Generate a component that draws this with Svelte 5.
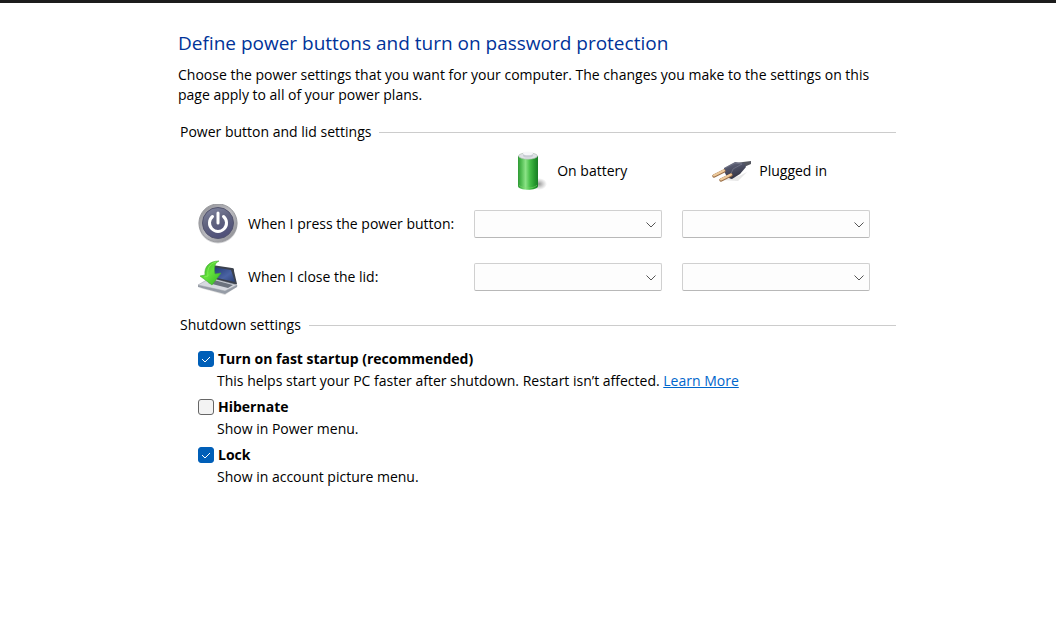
<script>
  let rows = [
    { id: 'power', label: 'When I press the power button:' },
    { id: 'lid', label: 'When I close the lid:' }
  ];

  let options = [
    { id: 'startup', title: 'Turn on fast startup (recommended)', text: 'This helps start your PC faster after shutdown. Restart isn’t affected.', link: 'Learn More', checked: true },
    { id: 'hibernate', title: 'Hibernate', text: 'Show in Power menu.', checked: false },
    { id: 'lock', title: 'Lock', text: 'Show in account picture menu.', checked: true }
  ];
</script>

<main>
  <h1>Define power buttons and turn on password protection</h1>
  <p class="intro">
    Choose the power settings that you want for your computer. The changes you make to the settings on this page apply to all of your power plans.
  </p>

  <section>
    <h2>Power button and lid settings</h2>
    <div class="settings">
      <div class="source battery">
        <svg width="40" height="40" viewBox="0 0 40 40" aria-hidden="true">
          <defs>
            <linearGradient id="cell" x1="0" x2="1">
              <stop offset="0" stop-color="#2f9a35" />
              <stop offset=".16" stop-color="#4fbb50" />
              <stop offset=".38" stop-color="#8be386" />
              <stop offset=".6" stop-color="#45bd47" />
              <stop offset=".85" stop-color="#23952c" />
              <stop offset="1" stop-color="#1a7c26" />
            </linearGradient>
            <radialGradient id="shade">
              <stop offset="0" stop-color="#555" stop-opacity=".6" />
              <stop offset="1" stop-color="#777" stop-opacity="0" />
            </radialGradient>
          </defs>
          <ellipse cx="30" cy="33" rx="8" ry="6" fill="url(#shade)" />
          <path d="M9 5v30c0 5 20 5 20 0V5z" fill="url(#cell)" />
          <path d="M10 34c3 4 15 4 18 0" fill="none" stroke="#7fdc6c" opacity=".5" />
          <ellipse cx="19" cy="5" rx="9.500" ry="3.200" fill="#dfe1e6" stroke="#a9b8ad" stroke-width=".6" />
          <path d="M14 2v3c1 2 9 2 10 0V2z" fill="#c9ccd4" />
          <ellipse cx="19" cy="2.400" rx="5" ry="1.800" fill="#f7f7fa" />
        </svg>
        <span>On battery</span>
      </div>
      <div class="source plugged">
        <svg width="40" height="40" viewBox="0 0 40 40" aria-hidden="true">
          <defs>
            <linearGradient id="plug" x1="0" y1="0" x2=".4" y2="1">
              <stop offset="0" stop-color="#6e7184" />
              <stop offset=".4" stop-color="#52556a" />
              <stop offset="1" stop-color="#303243" />
            </linearGradient>
          </defs>
          <path d="m11 29 16 1 9-9-8 4z" fill="#888" opacity=".2" />
          <path d="m27 12 5-1 8-1v3l-7 3-4 2z" fill="#55575f" />
          <path d="m13 17 11-6 9 1 2 4-6 7-8 5c-3 0-8-4-8-11z" fill="url(#plug)" />
          <path d="m14 17 10-5 7 1-9 5-3 7" fill="none" stroke="#858899" opacity=".5" />
          <path d="m13 20-10 5m17-1-10 5" stroke="#9b7049" stroke-width="3.500" stroke-linecap="round" />
          <path d="m13 19.500-10 5m17-1-10 5" stroke="#edc99b" stroke-width="2" stroke-linecap="round" />
        </svg>
        <span>Plugged in</span>
      </div>

      {#each rows as row}
        <div class="action">
          {#if row.id === 'power'}
            <svg width="40" height="40" viewBox="0 0 40 40" aria-hidden="true">
              <defs>
                <linearGradient id="rim" x1="0" y1="0" x2="1" y2="1">
                  <stop offset="0" stop-color="#8d8d92" />
                  <stop offset=".5" stop-color="#bbbbc0" />
                  <stop offset="1" stop-color="#88888e" />
                </linearGradient>
                <linearGradient id="face" x1="0" y1="0" x2=".4" y2="1">
                  <stop offset="0" stop-color="#858aa5" />
                  <stop offset=".5" stop-color="#626580" />
                  <stop offset="1" stop-color="#50517a" />
                </linearGradient>
              </defs>
              <circle cx="20" cy="20" r="19.500" fill="#d5d5d8" />
              <circle cx="20" cy="19" r="19" fill="url(#rim)" stroke="#98999d" />
              <circle cx="20" cy="19" r="15.500" fill="url(#face)" stroke="#53546e" />
              <path d="M14.500 12.500a8.500 8.500 0 1 0 11 0" fill="none" stroke="#fff" stroke-width="3" stroke-linecap="round" />
              <path d="M20 9v10" stroke="#fff" stroke-width="3" stroke-linecap="round" />
            </svg>
          {:else}
            <svg width="40" height="40" viewBox="0 0 40 40" aria-hidden="true">
              <defs>
                <linearGradient id="screen" x1="0" y1="0" x2="1" y2="1">
                  <stop offset="0" stop-color="#21376e" />
                  <stop offset=".6" stop-color="#4a63a4" />
                  <stop offset="1" stop-color="#2b3f72" />
                </linearGradient>
                <linearGradient id="arrow" x1="0" y1="0" x2="1" y2="1">
                  <stop offset="0" stop-color="#3fb52a" />
                  <stop offset=".5" stop-color="#62e03c" />
                  <stop offset="1" stop-color="#36b422" />
                </linearGradient>
              </defs>
              <path d="M2 31 27 38l13-9-2-3z" fill="#777" opacity=".25" />
              <path d="m14 8 20 3c2 0 2 1 2 3l3 13-4 1-22-7z" fill="#3b414d" />
              <path d="m15 10 18 3 4 12-22-5z" fill="url(#screen)" />
              <path d="m0 28 12-7 27 7-12 6z" fill="#d7dae0" stroke="#a4a9b1" stroke-width=".6" />
              <path d="m10 26 6-3 19 5-5 3z" fill="#6c737e" />
              <path d="m0 28 27 6 12-6v2l-12 7-27-7z" fill="#969ca6" />
              <path d="M21 4C16 6 16 12 17 17l6-1-9 12L2 19l5-1C6 10 11 4 21 4z" fill="url(#arrow)" stroke="#45ad33" stroke-width=".6" />
              <path d="M18 5c-7 2-9 7-8 14l-4 1" fill="none" stroke="#9cff67" opacity=".5" />
            </svg>
          {/if}
          <label for="{row.id}-battery">{row.label}</label>
        </div>
        {#each ['battery', 'plugged'] as source}
          <div class="picker">
            <select id="{row.id}-{source}" aria-label="{row.label} {source === 'battery' ? 'On battery' : 'Plugged in'}"></select>
            <svg width="10" height="6" viewBox="0 0 10 6" aria-hidden="true">
              <path d="m.5.5 4.500 4.500 4.500-4.500" fill="none" stroke="#555" />
            </svg>
          </div>
        {/each}
      {/each}
    </div>
  </section>

  <section class="shutdown">
    <h2>Shutdown settings</h2>
    <div class="options">
      {#each options as option}
        <div class="option">
          <div class="check">
            <span class="box">
              <input type="checkbox" id={option.id} bind:checked={option.checked} />
              <svg width="16" height="16" viewBox="0 0 16 16" aria-hidden="true">
                <path d="m4 8 3 3 5-5" fill="none" stroke="#fff" />
              </svg>
            </span>
            <label for={option.id}>{option.title}</label>
          </div>
          <p>{option.text}{#if option.link}{' '}<a href="#learn">{option.link}</a>{/if}</p>
        </div>
      {/each}
    </div>
  </section>
</main>

<style>
  :global(body) {
    background: #fff;
  }

  main {
    border-top: 3px solid #1c1c1c;
    padding: 26px 160px 40px 178px;
    color: #000;
    font-family: "Open Sans", sans-serif;
    font-size: 14px;
    line-height: 20px;
  }

  h1, h2, p {
    margin: 0;
    font-weight: 400;
  }

  h1 {
    color: #003399;
    font-size: 19px;
    line-height: 28px;
  }

  .intro {
    margin-top: 8px;
  }

  section {
    margin-top: 17px;
  }

  h2 {
    display: flex;
    align-items: center;
    gap: 8px;
    padding-left: 2px;
    font-size: 14px;
  }

  h2::after {
    content: "";
    flex: 1;
    height: 1px;
    background: #ccc;
  }

  .settings {
    display: grid;
    grid-template-columns: 1fr 188px 188px;
    column-gap: 20px;
    row-gap: 13px;
    padding: 9px 26px 0 20px;
  }

  .source, .action {
    display: flex;
    align-items: center;
  }

  .source {
    gap: 8px;
  }

  .battery {
    grid-column: 2;
    padding-left: 35px;
  }

  .plugged {
    padding-left: 29px;
  }

  .action {
    gap: 10px;
    white-space: nowrap;
  }

  .picker {
    position: relative;
    align-self: center;
  }

  .picker select {
    display: block;
    appearance: none;
    box-sizing: border-box;
    width: 100%;
    height: 28px;
    padding: 0 24px 0 8px;
    border: 1px solid #d0d0d0;
    border-bottom-color: #b8b8b8;
    border-radius: 2px;
    background: #fdfdfd;
    font: inherit;
  }

  .picker svg {
    position: absolute;
    top: 12px;
    right: 6px;
    pointer-events: none;
  }

  .shutdown {
    margin-top: 18px;
  }

  .options {
    display: flex;
    flex-direction: column;
    gap: 6px;
    padding: 14px 0 0 20px;
  }

  .check {
    display: flex;
    align-items: center;
    gap: 4px;
    font-weight: 700;
  }

  .box {
    position: relative;
    width: 16px;
    height: 16px;
  }

  .box input {
    display: block;
    appearance: none;
    box-sizing: border-box;
    width: 16px;
    height: 16px;
    margin: 0;
    border: 1px solid #666;
    border-radius: 3px;
    background: #f3f3f3;
  }

  .box input:checked {
    border-color: #005fb8;
    background: #005fb8;
  }

  .box svg {
    position: absolute;
    inset: 0;
    display: none;
    pointer-events: none;
  }

  .box input:checked + svg {
    display: block;
  }

  .option p {
    margin-top: 2px;
    padding-left: 19px;
  }

  a {
    color: #0066cc;
  }
</style>
